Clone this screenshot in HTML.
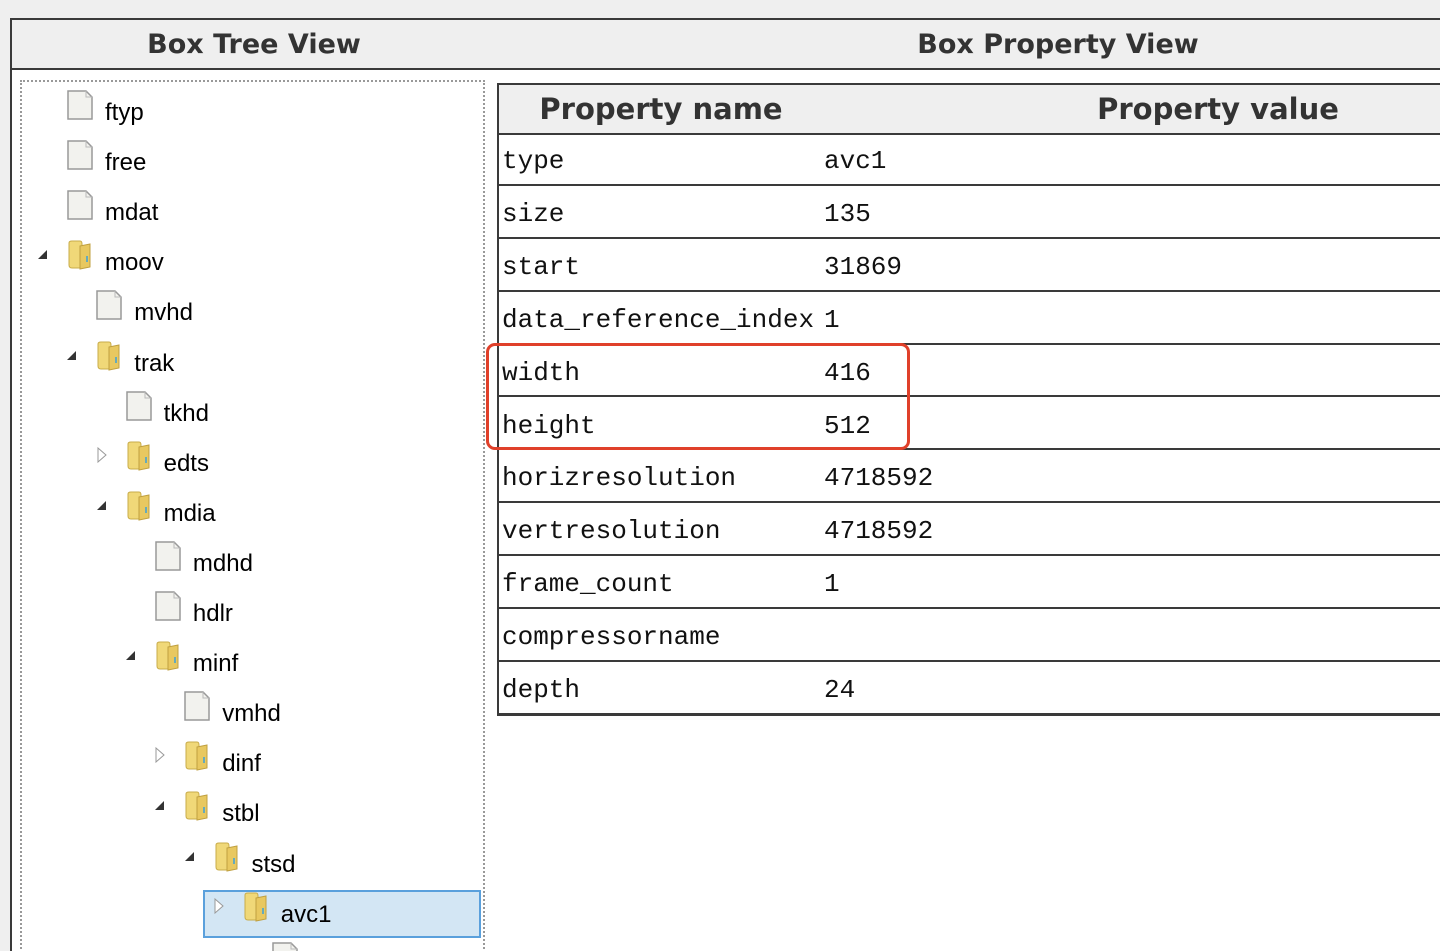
<!DOCTYPE html>
<html><head><meta charset="utf-8"><style>
*{margin:0;padding:0;box-sizing:border-box}
html,body{width:1440px;height:951px;overflow:hidden}
body{background:#efefef;position:relative;font-family:"DejaVu Sans","Liberation Sans",sans-serif}
.outer{position:absolute;left:10px;top:18px;width:1440px;height:960px;border:2px solid #3a3a3a;background:#fff}
.hdr{position:absolute;left:0;top:0;width:100%;height:50px;background:#efefef;border-bottom:2px solid #3a3a3a}
.ht{position:absolute;top:9px;font-weight:bold;font-size:27px;color:#333;transform:translateX(-50%);white-space:nowrap}
.tree{position:absolute;left:20px;top:80px;width:465px;height:900px;border:2px dotted #999}
.row{position:absolute;height:50px;font-size:24px;color:#000;font-family:"Liberation Sans",sans-serif}
.ic{position:absolute}
.lbl{position:absolute;left:38px;white-space:nowrap}
.tw{position:absolute}
.tbl{position:absolute;left:497px;top:83px;width:960px;height:633px;border:2px solid #3a3a3a;border-right:none}
.th{position:absolute;left:0;top:0;width:100%;height:50px;background:#efefef;border-bottom:2px solid #3a3a3a}
.tr{position:absolute;left:0;width:100%;border-bottom:2px solid #3a3a3a;font-family:"Liberation Mono",monospace;font-size:26px;color:#111}
.tr span{position:absolute;top:13px}
.red{position:absolute;left:486px;top:343px;width:424px;height:107px;border:3px solid #e0402a;border-radius:9px}
</style></head><body>
<div class="outer">
<div class="hdr">
<div class="ht" style="left:242px">Box Tree View</div>
<div class="ht" style="left:1046px">Box Property View</div>
</div>
</div>
<div class="tree"></div>
<div style="position:absolute;left:203px;top:890px;width:278px;height:48px;background:#d3e6f4;border:2px solid #5aa0dc"></div>
<svg width="0" height="0" style="position:absolute"><defs>
<symbol id="f" viewBox="0 0 26 30"><path d="M1 1H19L25 7V29H1Z" fill="#f2f2ee" stroke="#999" stroke-width="1.5"/><path d="M19 1V7H25" fill="none" stroke="#bbb"/></symbol>
<symbol id="d" viewBox="0 0 26 30"><path d="M2 3Q2 1 5 1H13Q15 1 15 4V28H5Q2 28 2 25Z" fill="#f0d878" stroke="#c9ac4a"/><path d="M13 6L23 4V27L13 29Z" fill="#e8c860" stroke="#c0a040"/><rect x="19" y="16" width="2" height="6" fill="#6ab"/></symbol>
</defs></svg>
<div id="t"></div>
<div class="tbl">
<div class="th">
<div class="ht" style="left:162px;top:7px;font-size:29px">Property name</div>
<div class="ht" style="left:719px;top:7px;font-size:29px">Property value</div>
</div>
</div>
<div id="r"></div>
<div class="red"></div>
<script>
var items=[["ftyp",0,"f",""],["free",0,"f",""],["mdat",0,"f",""],["moov",0,"d","e"],["mvhd",1,"f",""],["trak",1,"d","e"],["tkhd",2,"f",""],["edts",2,"d","c"],["mdia",2,"d","e"],["mdhd",3,"f",""],["hdlr",3,"f",""],["minf",3,"d","e"],["vmhd",4,"f",""],["dinf",4,"d","c"],["stbl",4,"d","e"],["stsd",5,"d","e"],["avc1",6,"d","c"],["",7,"f",""]];
var h="";items.forEach(function(it,i){var x=67+it[1]*29.3,y=111+i*50.1;
var tw="";if(it[3]=="e")tw='<svg class="tw" width="12" height="12" style="top:-12px;left:-30px"><path d="M10 1V10H1Z" fill="#333"/></svg>';
if(it[3]=="c")tw='<svg class="tw" width="12" height="16" style="top:-15px;left:-30px"><path d="M2 1L10 8L2 15Z" fill="#fff" stroke="#999"/></svg>';
h+='<div class="row" style="left:'+x+'px;top:'+y+'px">'+tw+'<svg class="ic" style="top:-21px" width="26" height="30"><use href="#'+it[2]+'"/></svg><div class="lbl" style="top:-12px">'+it[0]+'</div></div>';});
document.getElementById("t").innerHTML=h;
var rows=[["type","avc1"],["size","135"],["start","31869"],["data_reference_index","1"],["width","416"],["height","512"],["horizresolution","4718592"],["vertresolution","4718592"],["frame_count","1"],["compressorname",""],["depth","24"]];
var r="";rows.forEach(function(p,i){var y=133+i*52.9;r+='<div class="tr" style="left:499px;width:941px;top:'+y+'px;height:'+52.9+'px;position:absolute"><span style="left:3px">'+p[0]+'</span><span style="left:325px">'+p[1]+'</span></div>';});
document.getElementById("r").innerHTML=r;
</script>
</body></html>
